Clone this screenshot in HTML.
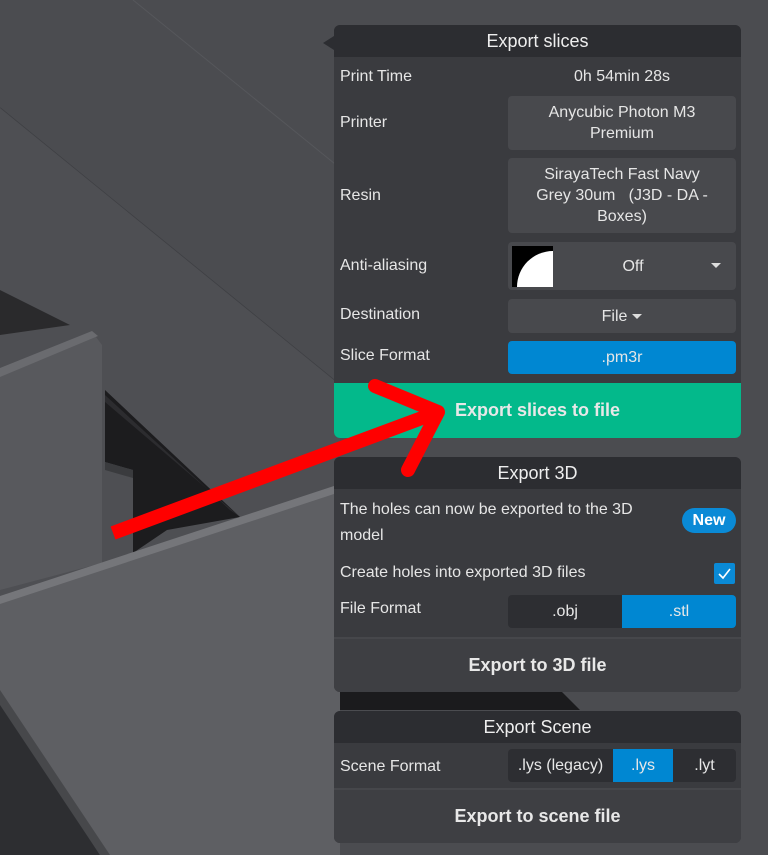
<!DOCTYPE html>
<html><head><meta charset="utf-8"><style>
*{margin:0;padding:0;box-sizing:border-box}
body{width:768px;height:855px;overflow:hidden;background:#4a4b4f;font-family:"Liberation Sans",sans-serif;color:#e8e8e8;position:relative}
svg.bg{position:absolute;left:0;top:0}
.p{position:absolute;left:334px;width:407px;background:#3a3b3f;border-radius:6px;overflow:hidden}
.h{background:#2c2d31;height:32px;line-height:32px;text-align:center;font-size:18px;color:#eee}
.a{position:absolute;font-size:16px;color:#e6e6e6}
.box{position:absolute;left:174px;width:228px;background:#48494d;border-radius:4px;text-align:center;font-size:16px;color:#e6e6e6;display:flex;align-items:center;justify-content:center;line-height:21px}
.btn{position:absolute;left:0;width:407px;text-align:center;font-weight:bold;font-size:18px;color:#e8e8e8;display:flex;align-items:center;justify-content:center}
.seg{position:absolute;display:flex;align-items:center;justify-content:center;font-size:16px}
</style></head><body>
<svg class="bg" width="768" height="855">
<rect width="768" height="855" fill="#4b4c50"/>
<line x1="133" y1="0" x2="340" y2="168" stroke="#56575b" stroke-width="1"/>
<line x1="0" y1="108" x2="340" y2="385" stroke="#3e3f43" stroke-width="1.5"/>
<polygon points="0,108 340,385 340,490 0,600" fill="#4e4f53"/>
<polygon points="0,290 70,325 0,335" fill="#2a2a2c"/>
<polygon points="0,370 93,333 102,345 102,563 0,590" fill="#58595d"/>
<polygon points="0,368 92,331 98,336 0,377" fill="#6a6b6f"/>
<polygon points="105,390 240,517 167,530 133,553 133,470 105,462" fill="#1c1c1e"/>
<polygon points="105,462 133,470 133,478 105,470" fill="#3a3b3e"/>
<polygon points="105,395 230,510 240,517 105,402" fill="#2c2c2f"/>
<polygon points="0,600 340,488 340,855 0,855" fill="#5e5f63"/>
<polygon points="0,596 340,484 340,492 0,604" fill="#75767a"/>
<polygon points="0,700 100,855 0,855" fill="#2d2e31"/>
<polygon points="0,690 110,855 100,855 0,705" fill="#47484b"/>
<polygon points="340,690 560,690 580,710 340,710" fill="#1b1b1d"/>
</svg>

<div class="p" style="top:25px;height:413px">
 <div class="h">Export slices</div>
 <div class="a" style="left:6px;top:43px">Print Time</div>
 <div class="a" style="left:174px;width:228px;text-align:center;top:43px">0h 54min 28s</div>
 <div class="a" style="left:6px;top:89px">Printer</div>
 <div class="box" style="top:71px;height:54px">Anycubic Photon M3<br>Premium</div>
 <div class="a" style="left:6px;top:162px">Resin</div>
 <div class="box" style="top:133px;height:75px">SirayaTech Fast Navy<br>Grey 30um &nbsp;&nbsp;(J3D - DA -<br>Boxes)</div>
 <div class="a" style="left:6px;top:232px">Anti-aliasing</div>
 <div class="box" style="top:217px;height:48px">
  <div style="position:absolute;left:4px;top:4px;width:41px;height:41px;background:#000;overflow:hidden"><div style="position:absolute;left:5px;top:5px;width:72px;height:72px;border-radius:50%;background:#fff"></div></div>
  <span style="margin-left:22px">Off</span>
  <div style="position:absolute;right:15px;top:21px;border-left:5px solid transparent;border-right:5px solid transparent;border-top:5px solid #ddd"></div>
 </div>
 <div class="a" style="left:6px;top:281px">Destination</div>
 <div class="box" style="top:274px;height:34px">File <span style="display:inline-block;margin-left:5px;border-left:5px solid transparent;border-right:5px solid transparent;border-top:5px solid #ddd"></span></div>
 <div class="a" style="left:6px;top:322px">Slice Format</div>
 <div class="box" style="top:316px;height:33px;background:#0087d2">.pm3r</div>
 <div class="btn" style="top:358px;height:55px;background:#03b98b">Export slices to file</div>
</div>

<div class="p" style="top:457px;height:235px">
 <div class="h">Export 3D</div>
 <div class="a" style="left:6px;top:40px;line-height:26px;width:330px">The holes can now be exported to the 3D<br>model</div>
 <div style="position:absolute;left:348px;top:51px;width:54px;height:25px;border-radius:13px;background:#0a8ad6;color:#fff;font-weight:bold;font-size:16px;text-align:center;line-height:25px">New</div>
 <div class="a" style="left:6px;top:107px">Create holes into exported 3D files</div>
 <div style="position:absolute;left:380px;top:106px;width:21px;height:21px;background:#0a8ad6;border-radius:2px"><svg width="21" height="21"><path d="M5 11 L9 15 L16 6" stroke="#fff" stroke-width="1.6" fill="none"/></svg></div>
 <div class="a" style="left:6px;top:143px">File Format</div>
 <div class="seg" style="left:174px;top:138px;width:114px;height:33px;background:#2d2e32;border-radius:4px 0 0 4px">.obj</div>
 <div class="seg" style="left:288px;top:138px;width:114px;height:33px;background:#0087d2;border-radius:0 4px 4px 0">.stl</div>
 <div class="btn" style="top:180px;height:55px;background:#3e3f43;border-top:2px solid #46474b">Export to 3D file</div>
</div>

<div class="p" style="top:711px;height:132px">
 <div class="h">Export Scene</div>
 <div class="a" style="left:6px;top:47px">Scene Format</div>
 <div class="seg" style="left:174px;top:38px;width:105px;height:33px;background:#2d2e32;border-radius:4px 0 0 4px">.lys (legacy)</div>
 <div class="seg" style="left:279px;top:38px;width:60px;height:33px;background:#0087d2">.lys</div>
 <div class="seg" style="left:339px;top:38px;width:63px;height:33px;background:#2d2e32;border-radius:0 4px 4px 0">.lyt</div>
 <div class="btn" style="top:77px;height:55px;background:#3e3f43;border-top:2px solid #46474b">Export to scene file</div>
</div>
<div style="position:absolute;left:323px;top:36px;border-top:7px solid transparent;border-bottom:7px solid transparent;border-right:11px solid #2c2d31"></div>

<svg class="bg" width="768" height="855" style="pointer-events:none">
<g stroke="#ff0000" stroke-width="14" fill="none" stroke-linecap="round" stroke-linejoin="round">
<line x1="113" y1="533" x2="438" y2="412" stroke-linecap="butt"/>
<polyline points="375,386 438,412 408,470"/>
</g>
</svg>
</body></html>
